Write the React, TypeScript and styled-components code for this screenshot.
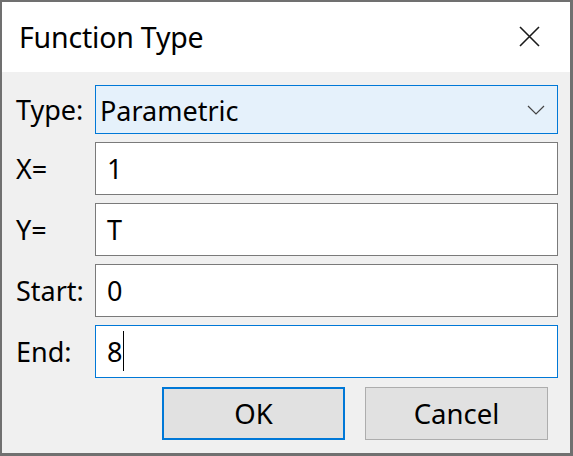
import styled, { createGlobalStyle } from "styled-components";

const GlobalStyle = createGlobalStyle`
  html, body {
    margin: 0;
    padding: 0;
    background: #ffffff;
  }
  body {
    font-family: "Noto Sans", "Open Sans", sans-serif;
  }
`;

const fields = [
  { label: "X=", value: "1" },
  { label: "Y=", value: "T" },
  { label: "Start:", value: "0" },
  { label: "End:", value: "8", focused: true },
];

const App = () => {
  return (
    <>
      <GlobalStyle />
      <Window>
        <TitleBar>
          <Title>Function Type</Title>
          <CloseButton aria-label="Close">
            <svg width="21" height="21" viewBox="0 0 21 21">
              <path d="M1 1L20 20M20 1L1 20" stroke="#1a1a1a" strokeWidth="1.6" fill="none" />
            </svg>
          </CloseButton>
        </TitleBar>
        <Body>
          <FormGrid>
            <Label>Type:</Label>
            <Combo>
              <ComboText>Parametric</ComboText>
              <svg width="18" height="10" viewBox="0 0 18 10">
                <path d="M1 1L9 9L17 1" stroke="#444" strokeWidth="1.2" fill="none" />
              </svg>
            </Combo>
            {fields.map((f) => (
              <Row key={f.label}>
                <Label>{f.label}</Label>
                <Field $focused={!!f.focused}>
                  {f.value}
                  {f.focused && <Caret />}
                </Field>
              </Row>
            ))}
          </FormGrid>
          <ButtonRow>
            <Button $default>OK</Button>
            <Button>Cancel</Button>
          </ButtonRow>
        </Body>
      </Window>
    </>
  );
};

export default App;

const Window = styled.div`
  width: 573px;
  height: 456px;
  box-sizing: border-box;
  border-style: solid;
  border-color: #707070;
  border-width: 2px 3px 3px 2px;
  background: #f0f0f0;
  display: flex;
  flex-direction: column;
  color: #000;
`;

const TitleBar = styled.div`
  height: 70px;
  background: #ffffff;
  display: flex;
  align-items: center;
  justify-content: space-between;
  padding: 0 30px 0 17px;
  flex-shrink: 0;
`;

const Title = styled.div`
  font-size: 28.5px;
  letter-spacing: -0.2px;
`;

const CloseButton = styled.div`
  display: flex;
  align-items: center;
  padding-bottom: 2px;
`;

const Body = styled.div`
  flex: 1;
  display: flex;
  flex-direction: column;
  padding: 13px 12px 0 14px;
`;

const FormGrid = styled.div`
  display: grid;
  grid-template-columns: 79px 463px;
  row-gap: 8px;
`;

const Row = styled.div`
  display: contents;
`;

const Label = styled.div`
  display: flex;
  align-items: center;
  font-size: 27px;
`;

const Combo = styled.div`
  height: 49px;
  box-sizing: border-box;
  border: 1px solid #0078d7;
  background: #e5f1fb;
  display: flex;
  align-items: center;
  justify-content: space-between;
  padding: 0 12px 0 4px;
`;

const ComboText = styled.span`
  font-size: 27px;
  padding-top: 1px;
`;

const Field = styled.div<{ $focused: boolean }>`
  height: 53px;
  box-sizing: border-box;
  border: 1px solid ${(p) => (p.$focused ? "#0078d7" : "#7a7a7a")};
  background: #ffffff;
  display: flex;
  align-items: center;
  padding: 0 0 1px 11px;
  font-size: 27px;
`;

const Caret = styled.span`
  display: inline-block;
  width: 1px;
  height: 40px;
  background: #000;
  margin-left: 1px;
`;

const ButtonRow = styled.div`
  display: flex;
  justify-content: flex-end;
  gap: 20px;
  margin-top: 9px;
  padding-right: 10px;
`;

const Button = styled.div<{ $default?: boolean }>`
  width: 183px;
  height: 53px;
  box-sizing: border-box;
  border: ${(p) => (p.$default ? "2px solid #0078d7" : "1px solid #adadad")};
  background: #e1e1e1;
  display: flex;
  align-items: center;
  justify-content: center;
  font-size: 27.5px;
`;
